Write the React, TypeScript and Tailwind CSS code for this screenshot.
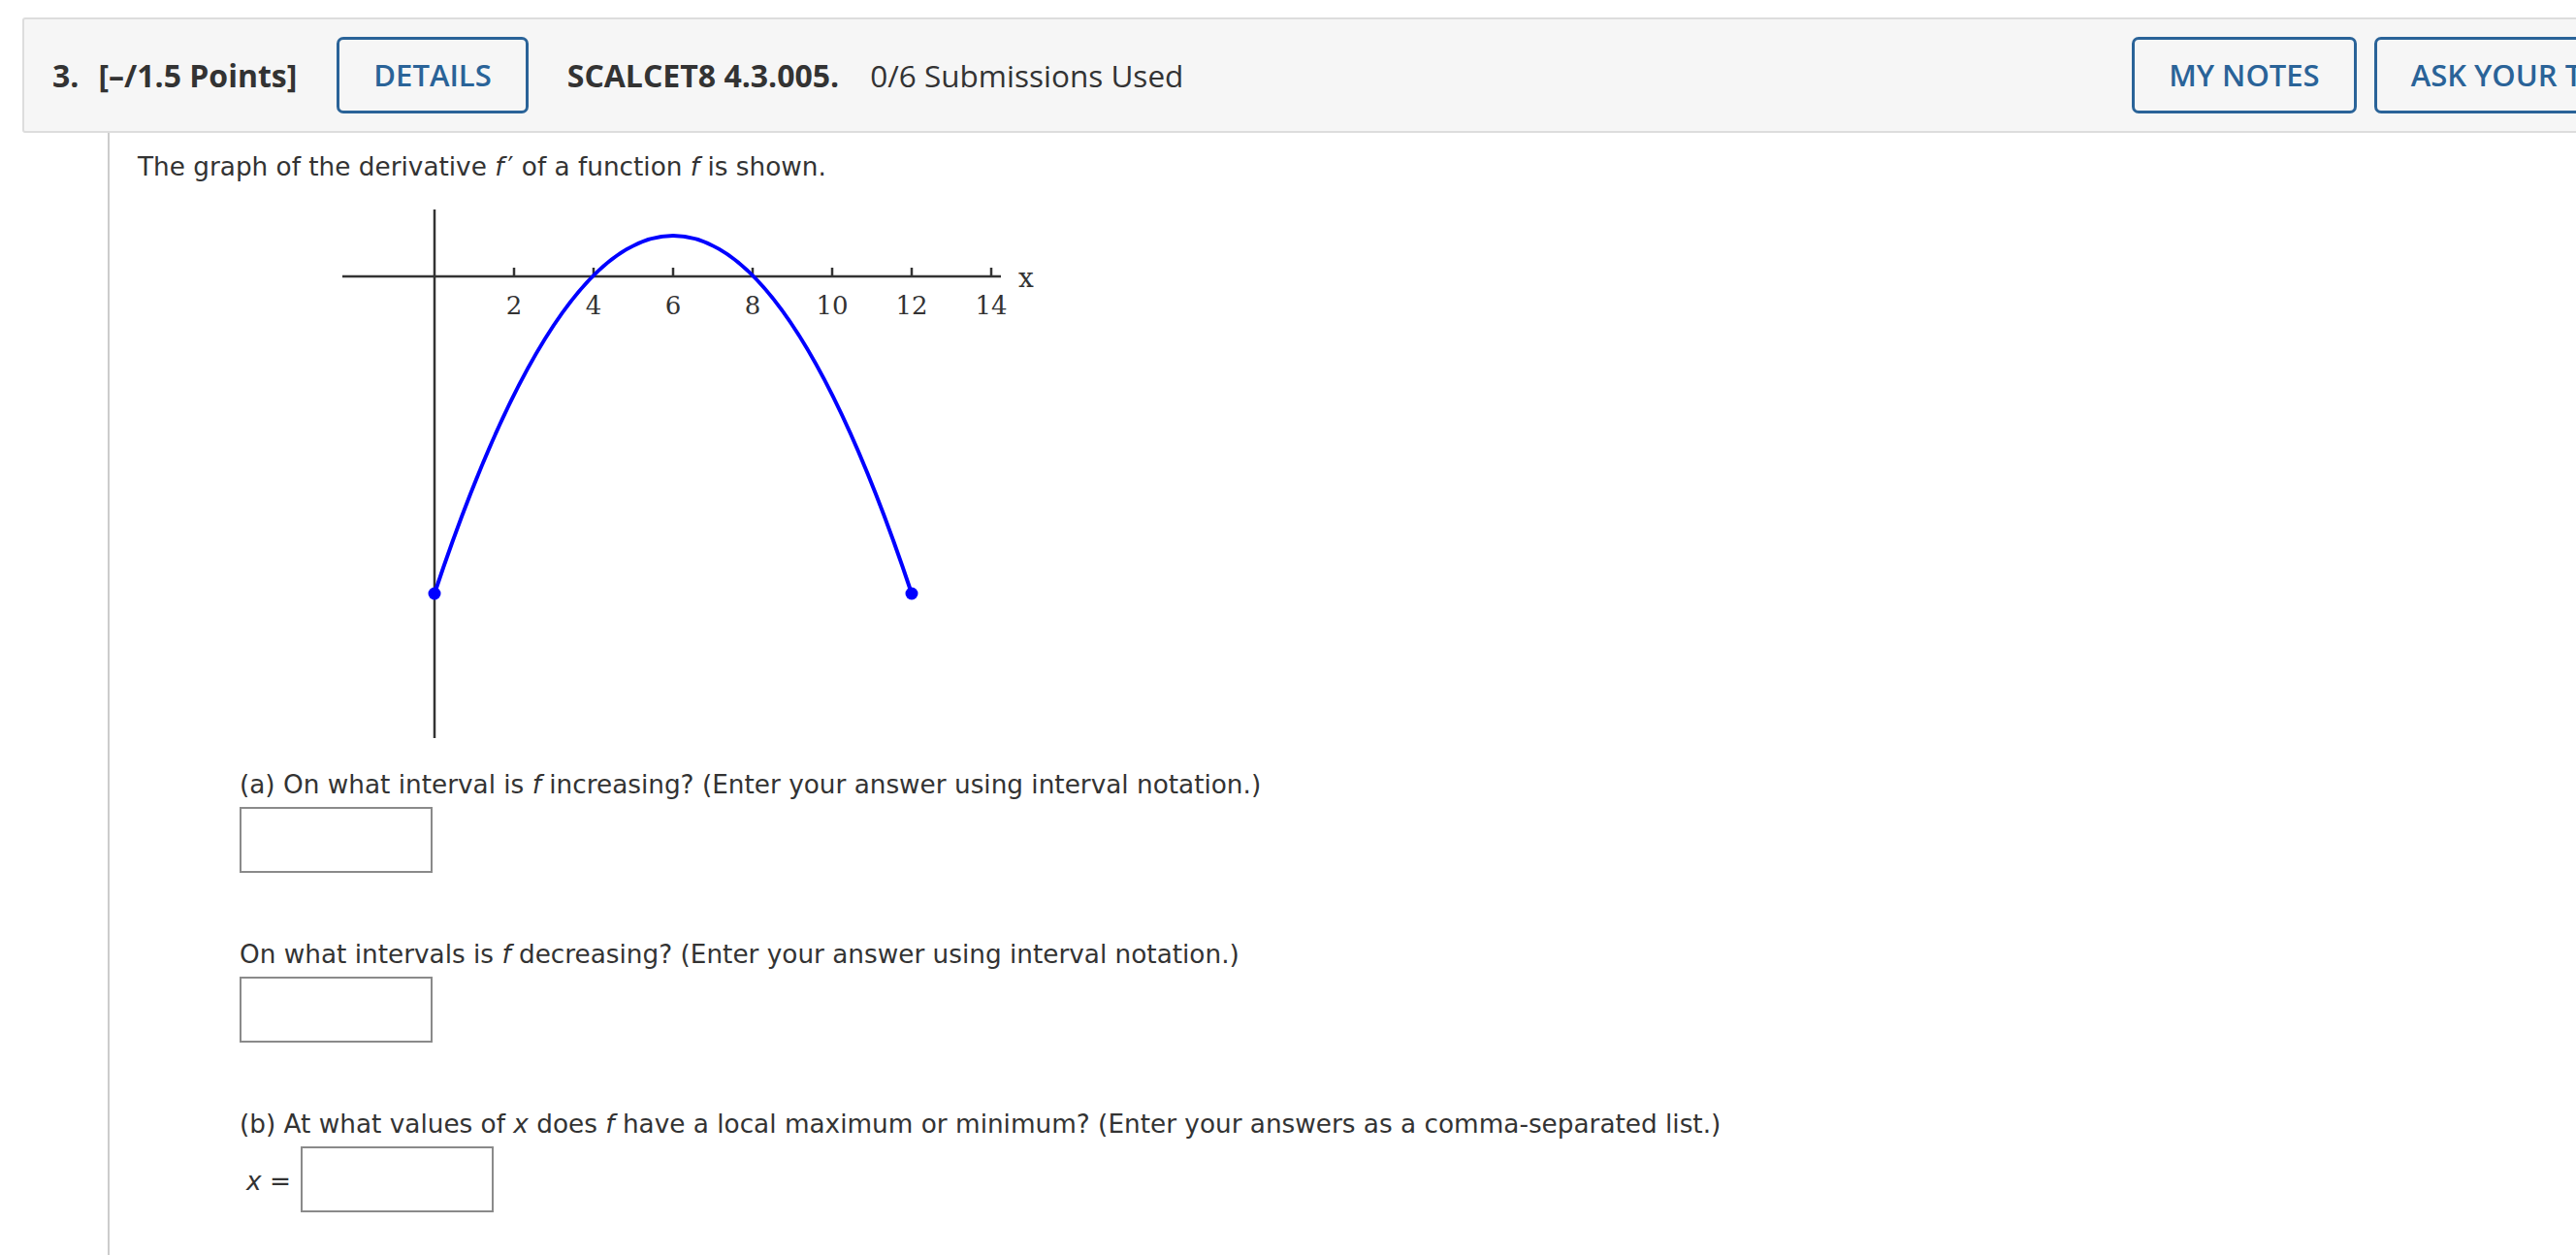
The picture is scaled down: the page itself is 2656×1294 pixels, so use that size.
const ticks = [2, 4, 6, 8, 10, 12, 14]

function Graph() {
  return (
    <svg
      width={740}
      height={565}
      viewBox="340 205 740 565"
      className="block ml-[198px] mt-[17px]"
    >
      <line x1={353} y1={285} x2={1032} y2={285} stroke="#333" strokeWidth={2.5} />
      <line x1={448} y1={216} x2={448} y2={761} stroke="#333" strokeWidth={2.5} />
      {ticks.map((t) => (
        <g key={t}>
          <line x1={448 + t * 41} y1={276} x2={448 + t * 41} y2={285} stroke="#333" strokeWidth={2.5} />
          <text
            x={448 + t * 41}
            y={324}
            textAnchor="middle"
            fontFamily="'DejaVu Serif', serif"
            fontSize={26}
            fill="#333"
          >
            {t}
          </text>
        </g>
      ))}
      <text x={1050} y={296} fontFamily="'DejaVu Serif', serif" fontSize={28} fill="#333">
        x
      </text>
      <path d="M448 612 Q694 -126 940 612" fill="none" stroke="#0000ff" strokeWidth={4} />
      <circle cx={448} cy={612} r={6.5} fill="#0000ff" />
      <circle cx={940} cy={612} r={6.5} fill="#0000ff" />
    </svg>
  )
}

function HeadButton({ label }: { label: string }) {
  return (
    <div className="h-[79px] px-[35px] flex items-center border-[3px] border-[#2a6398] rounded-[7px] text-[#2a6398] text-[31px] font-semibold whitespace-nowrap">
      {label}
    </div>
  )
}

function AnswerBox({ className = '' }: { className?: string }) {
  return (
    <div className={`w-[199px] h-[68px] bg-white border-2 border-[#8a8a8a] ${className}`} />
  )
}

function App() {
  return (
    <div className="w-[2656px] h-[1294px] overflow-hidden bg-white text-[#333]">
      <div className="pt-[18px] pl-[23px]" style={{ fontFamily: "'Open Sans', sans-serif" }}>
        <header className="w-[2820px] h-[119px] flex items-center justify-between pl-[29px] pr-[23px] bg-[#f6f6f6] border-2 border-[#ddd] rounded-[3px]">
          <div className="flex items-center">
            <span className="text-[32px] font-bold">3.</span>
            <span className="ml-[20px] text-[32px] font-bold">[–/1.5 Points]</span>
            <div className="ml-[41px]">
              <HeadButton label="DETAILS" />
            </div>
            <span className="ml-[40px] text-[32px] font-bold">SCALCET8 4.3.005.</span>
            <span className="ml-[32px] text-[31.5px]">0/6 Submissions Used</span>
          </div>
          <div className="flex items-center gap-[18px]">
            <HeadButton label="MY NOTES" />
            <HeadButton label="ASK YOUR TEACHER" />
          </div>
        </header>
      </div>

      <div
        className="ml-[111px] border-l-2 border-[#ccc] pl-[29px] pt-[19px] h-[1200px]"
        style={{ fontFamily: "'DejaVu Sans', sans-serif" }}
      >
        <p className="text-[26.3px] leading-[32px]">
          The graph of the derivative <i>f</i>
          <span className="ml-[4px]">′</span> of a function <i>f</i> is shown.
        </p>

        <Graph />

        <div className="ml-[105px] mt-[23px] text-[26.3px] leading-[32px]">
          <p>
            (a) On what interval is <i>f</i> increasing? (Enter your answer using interval notation.)
          </p>
          <AnswerBox className="mt-[7px]" />

          <p className="mt-[68px]">
            On what intervals is <i>f</i> decreasing? (Enter your answer using interval notation.)
          </p>
          <AnswerBox className="mt-[7px]" />

          <p className="mt-[68px]">
            (b) At what values of <i>x</i> does <i>f</i> have a local maximum or minimum? (Enter your answers as a comma-separated list.)
          </p>
          <div className="mt-[7px] flex items-center">
            <span className="ml-[7px] w-[56px] pt-[4px]">
              <i>x</i> =
            </span>
            <AnswerBox />
          </div>
        </div>
      </div>
    </div>
  )
}

export default App
